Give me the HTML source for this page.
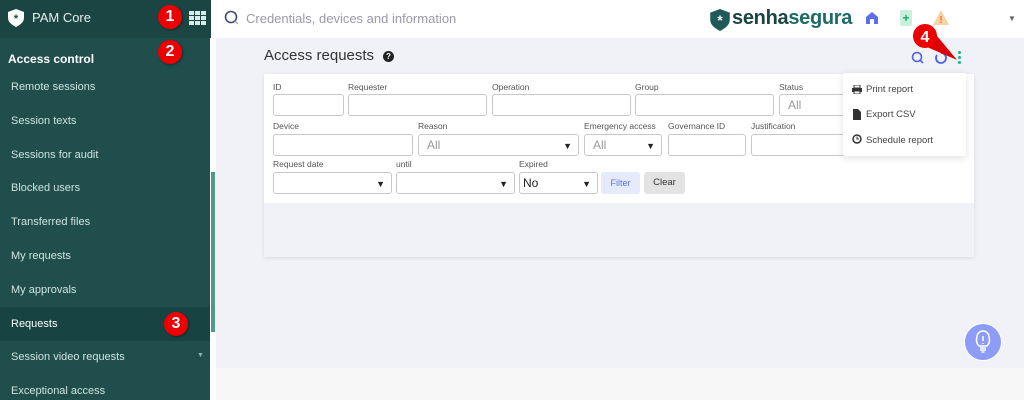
<!DOCTYPE html>
<html><head><style>
*{box-sizing:border-box;margin:0;padding:0}
body{width:1024px;height:400px;overflow:hidden;font-family:"Liberation Sans",sans-serif;background:#f1f2f7;position:relative}
.a{position:absolute}
#side{left:0;top:0;width:211px;height:400px;background:#1f4e4c}
#sidetop{left:0;top:0;width:211px;height:38px;background:#1b4543}
.mi{position:absolute;left:11px;font-size:11px;color:#cfe3e0}
.badge{position:absolute;width:24px;height:24px;border-radius:50%;background:#e00;color:#fff;font-weight:bold;font-size:16px;text-align:center;line-height:24px;box-shadow:1px 1px 2px rgba(0,0,0,.4)}
.lbl{position:absolute;font-size:8.5px;color:#555}
.in{position:absolute;height:22px;border:1px solid #c8c8c8;border-radius:3px;background:#fff;font-size:12px;color:#999;padding:3px 8px}
.arr{position:absolute;right:6px;top:6px;font-size:9px;color:#222}
.mm{position:absolute;left:853px;font-size:9.5px;color:#444}
</style></head><body>
<div class="a" style="left:211px;top:0;width:813px;height:38px;background:#fff"></div>
<div class="a" style="left:211px;top:368px;width:813px;height:32px;background:#f7f7f7"></div>
<div id="side" class="a"></div>
<div id="sidetop" class="a"></div>
<svg class="a" style="left:8px;top:9px" width="16" height="18" viewBox="0 0 16 18"><path d="M8 0L16 3V9C16 13 12 16 8 18C4 16 0 13 0 9V3Z" fill="#fff"/><text x="8" y="13" font-size="11" text-anchor="middle" fill="#1b4543" font-weight="bold">*</text></svg>
<div class="a" style="left:32px;top:10px;font-size:13px;color:#e4efee">PAM Core</div>
<svg class="a" style="left:189px;top:11px" width="17" height="15"><g fill="#d8ece8"><rect x="0" y="0" width="5" height="4"/><rect x="6" y="0" width="5" height="4"/><rect x="12" y="0" width="5" height="4"/><rect x="0" y="5" width="5" height="4"/><rect x="6" y="5" width="5" height="4"/><rect x="12" y="5" width="5" height="4"/><rect x="0" y="10" width="5" height="4"/><rect x="6" y="10" width="5" height="4"/><rect x="12" y="10" width="5" height="4"/></g></svg>
<div class="badge" style="left:158px;top:5px">1</div>
<div class="badge" style="left:158px;top:40px">2</div>
<div class="a" style="left:8px;top:52px;font-size:12px;font-weight:bold;color:#fff">Access control</div>
<div class="mi" style="top:81px">Remote sessions</div>
<div class="mi" style="top:115px">Session texts</div>
<div class="mi" style="top:149px">Sessions for audit</div>
<div class="mi" style="top:182px">Blocked users</div>
<div class="mi" style="top:216px">Transferred files</div>
<div class="mi" style="top:250px">My requests</div>
<div class="mi" style="top:284px">My approvals</div>
<div class="a" style="left:0;top:307px;width:210px;height:34px;background:#174442"></div>
<div class="mi" style="top:318px;color:#fff">Requests</div>
<div class="badge" style="left:164px;top:312px">3</div>
<div class="mi" style="top:351px">Session video requests</div>
<div class="a" style="left:197px;top:352px;font-size:7px;color:#8fb0ac">▼</div>
<div class="mi" style="top:385px">Exceptional access</div>
<div class="a" style="left:210px;top:38px;width:6px;height:362px;background:#fff"></div>
<div class="a" style="left:211px;top:172px;width:4px;height:160px;background:#4f9a8a"></div>
<svg class="a" style="left:224px;top:10px" width="16" height="16"><circle cx="7" cy="7" r="5.5" fill="none" stroke="#3b4a7a" stroke-width="1.6"/><line x1="11" y1="11" x2="14" y2="14" stroke="#aaa" stroke-width="1.4"/></svg>
<div class="a" style="left:246px;top:11px;font-size:13px;color:#9a9aa8">Credentials, devices and information</div>
<svg class="a" style="left:710px;top:9px" width="20" height="22" viewBox="0 0 16 18"><path d="M8 0L16 3V9C16 13 12 16 8 18C4 16 0 13 0 9V3Z" fill="#1e5b58"/><text x="8" y="13" font-size="11" text-anchor="middle" fill="#fff" font-weight="bold">*</text></svg>
<div class="a" style="left:732px;top:7px;font-size:20px;font-weight:bold;color:#1b4543;letter-spacing:-0.3px">senha<span style="color:#1e6b66">segura</span></div>
<svg class="a" style="left:865px;top:11px" width="14" height="14"><path d="M1 6L7 1L13 6V13H1Z" fill="#5b6ef0"/><rect x="5" y="8" width="4" height="5" fill="#fff"/></svg>
<div class="a" style="left:900px;top:10px;width:12px;height:16px;background:#c9f0dc;border-radius:2px;color:#1aa86a;font-size:12px;font-weight:bold;text-align:center;line-height:16px">+</div>
<svg class="a" style="left:933px;top:10px" width="16" height="15"><path d="M8 0L16 15H0Z" fill="#f9d3a8"/><text x="8" y="13" font-size="10" text-anchor="middle" fill="#e87a1a" font-weight="bold">!</text></svg>
<div class="a" style="left:1008px;top:14px;font-size:8px;color:#666">▼</div>
<div class="a" style="left:264px;top:47px;font-size:15px;color:#333">Access requests</div>
<div class="a" style="left:383px;top:51px;width:11px;height:11px;border-radius:50%;background:#222;color:#fff;font-size:8px;font-weight:bold;text-align:center;line-height:11px">?</div>
<svg class="a" style="left:911px;top:51px" width="14" height="14"><circle cx="6" cy="6" r="4.5" fill="none" stroke="#4a62e8" stroke-width="1.6"/><line x1="9.5" y1="9.5" x2="12" y2="12" stroke="#4a62e8" stroke-width="1.6"/></svg>
<svg class="a" style="left:934px;top:51px" width="14" height="14"><path d="M3 4A5 5 0 1 0 7 2" fill="none" stroke="#4a62e8" stroke-width="1.8"/></svg>
<div class="a" style="left:958px;top:51px;width:4px;height:14px"><div style="width:3px;height:3px;border-radius:50%;background:#1ab58a;margin-bottom:2px"></div><div style="width:3px;height:3px;border-radius:50%;background:#1ab58a;margin-bottom:2px"></div><div style="width:3px;height:3px;border-radius:50%;background:#1ab58a"></div></div>
<svg class="a" style="left:0;top:0" width="1024" height="80"><path d="M920 44L957 60L932 30Z" fill="#d00"/><circle cx="925" cy="36" r="12" fill="#e00"/><text x="925" y="42" font-size="16" font-weight="bold" fill="#fff" text-anchor="middle" font-family="Liberation Sans">4</text></svg>
<div class="a" style="left:264px;top:74px;width:710px;height:183px;background:#f1f2f7;box-shadow:0 1px 4px rgba(0,0,0,.1)"></div>
<div class="a" style="left:264px;top:74px;width:710px;height:129px;background:#fff"></div>
<div class="lbl" style="left:273px;top:82px">ID</div>
<div class="lbl" style="left:348px;top:82px">Requester</div>
<div class="lbl" style="left:492px;top:82px">Operation</div>
<div class="lbl" style="left:635px;top:82px">Group</div>
<div class="lbl" style="left:779px;top:82px">Status</div>
<div class="in" style="left:273px;top:94px;width:71px"></div>
<div class="in" style="left:348px;top:94px;width:139px"></div>
<div class="in" style="left:492px;top:94px;width:139px"></div>
<div class="in" style="left:635px;top:94px;width:139px"></div>
<div class="in" style="left:779px;top:94px;width:80px">All</div>
<div class="lbl" style="left:273px;top:121px">Device</div>
<div class="lbl" style="left:418px;top:121px">Reason</div>
<div class="lbl" style="left:584px;top:121px">Emergency access</div>
<div class="lbl" style="left:668px;top:121px">Governance ID</div>
<div class="lbl" style="left:751px;top:121px">Justification</div>
<div class="in" style="left:273px;top:134px;width:140px"></div>
<div class="in" style="left:418px;top:134px;width:161px">All<span class="arr">▼</span></div>
<div class="in" style="left:584px;top:134px;width:78px">All<span class="arr">▼</span></div>
<div class="in" style="left:668px;top:134px;width:78px"></div>
<div class="in" style="left:751px;top:134px;width:100px"></div>
<div class="lbl" style="left:273px;top:159px">Request date</div>
<div class="lbl" style="left:396px;top:159px">until</div>
<div class="lbl" style="left:519px;top:159px">Expired</div>
<div class="in" style="left:273px;top:172px;width:119px"><span class="arr">▼</span></div>
<div class="in" style="left:396px;top:172px;width:119px"><span class="arr">▼</span></div>
<div class="in" style="left:519px;top:172px;width:79px;color:#222;padding-left:3px">No<span class="arr">▼</span></div>
<div class="a" style="left:601px;top:172px;width:39px;height:22px;background:#e6ebfc;border-radius:3px;color:#5b73e0;font-size:9px;text-align:center;line-height:22px">Filter</div>
<div class="a" style="left:644px;top:172px;width:41px;height:22px;background:#e3e3e3;border-radius:3px;color:#333;font-size:9.5px;text-align:center;line-height:22px">Clear</div>
<div class="a" style="left:843px;top:73px;width:123px;height:83px;background:#fff;box-shadow:0 2px 8px rgba(0,0,0,.12);border-radius:2px"></div>
<svg class="a" style="left:852px;top:85px" width="10" height="9"><rect x="2" y="0" width="6" height="3" fill="none" stroke="#333" stroke-width="1"/><rect x="0" y="3" width="10" height="4" fill="#333"/><rect x="2" y="6" width="6" height="3" fill="#fff" stroke="#333" stroke-width="1"/></svg>
<div class="mm" style="left:866px;top:84px">Print report</div>
<svg class="a" style="left:853px;top:109px" width="8" height="11"><path d="M0 0H5L8 3V11H0Z" fill="#333"/></svg>
<div class="mm" style="left:866px;top:109px">Export CSV</div>
<svg class="a" style="left:852px;top:134px" width="10" height="10"><circle cx="5" cy="5" r="4" fill="none" stroke="#333" stroke-width="1.5"/><path d="M5 2.5V5H7" stroke="#333" fill="none"/></svg>
<div class="mm" style="left:866px;top:135px">Schedule report</div>
<div class="a" style="left:964px;top:323px;width:38px;height:38px;border-radius:50%;background:#8d9cf6;border:1px solid #fff"></div>
<svg class="a" style="left:973px;top:330px" width="20" height="24" viewBox="0 0 20 24"><path d="M6 16C3 13 3 10 4 7A6 6 0 0 1 16 7C17 10 17 13 14 16Z" fill="none" stroke="#fff" stroke-width="1.5"/><path d="M7 18H13M7 20H13M8.5 22H11.5" stroke="#fff" stroke-width="1.4"/><path d="M10 6V11M10 13V14" stroke="#fff" stroke-width="1.5"/></svg>
</body></html>
